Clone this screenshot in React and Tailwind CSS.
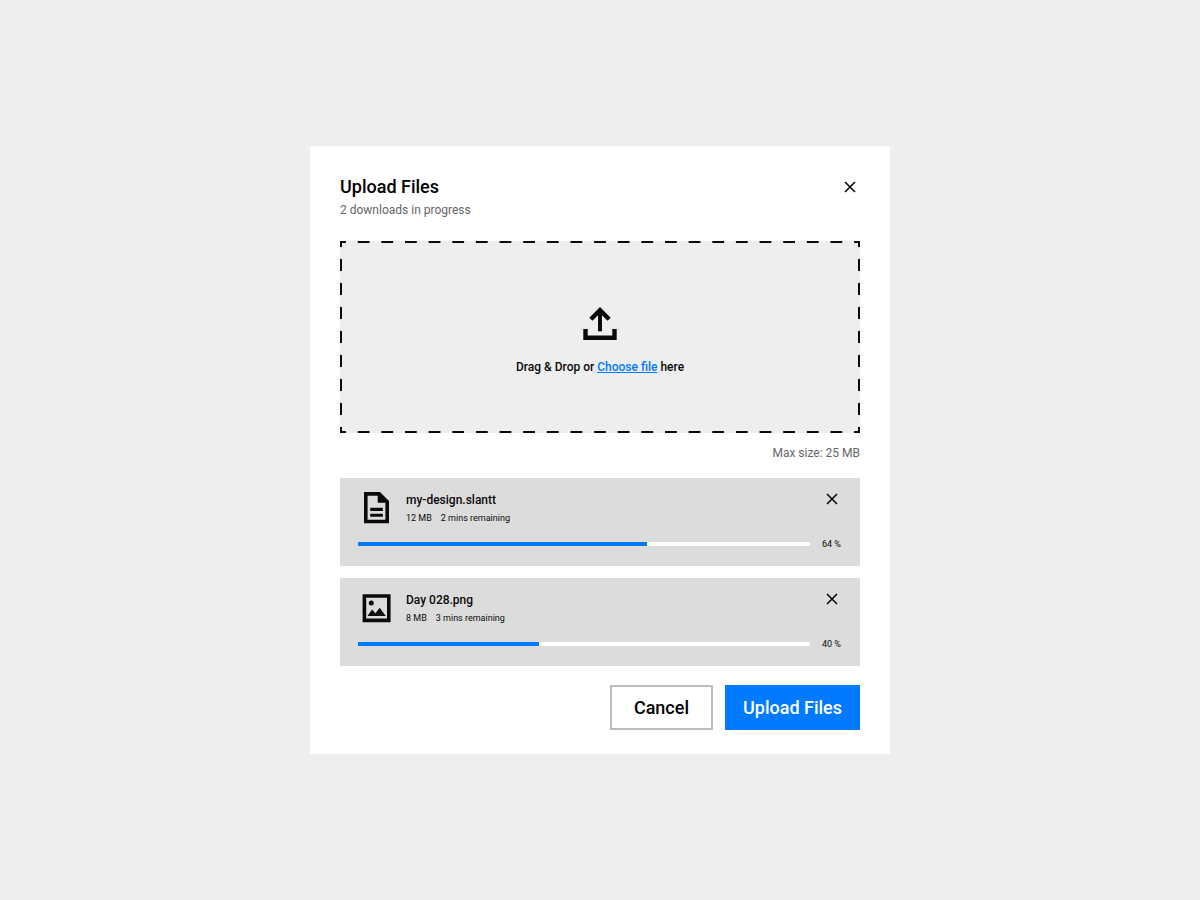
import { useState } from "react";

const initialFiles = [
    { id: 1, name: "my-design.slantt", size: "12 MB", remaining: "2 mins remaining", progress: 64, type: "document" },
    { id: 2, name: "Day 028.png", size: "8 MB", remaining: "3 mins remaining", progress: 40, type: "image" },
];

function CloseIcon() {
    return (
        <svg viewBox="0 0 12 12" className="w-3 h-3" fill="none" stroke="currentColor" strokeWidth="1.6" aria-hidden="true">
            <path d="M1 1L11 11M11 1L1 11" />
        </svg>
    );
}

function UploadIcon() {
    return (
        <svg viewBox="0 0 36 36" className="w-9 h-9" fill="none" stroke="currentColor" strokeWidth="4.4" aria-hidden="true">
            <path d="M3.5 23V31.8H32.5V23" />
            <path d="M8.9 13.2L18 4.1L27.1 13.2" />
            <path d="M18 5V25.3" strokeWidth="4" />
        </svg>
    );
}

function DocumentIcon() {
    return (
        <svg viewBox="0 0 36 36" className="w-9 h-9 shrink-0" fill="currentColor" aria-hidden="true">
            <path fillRule="evenodd" d="M6 2H22L31 11V33.3H6ZM9.6 5.8V29.8H27.4V12.7H19.7V5.8Z" />
            <path d="M12.2 17.8H24.9V20.9H12.2ZM12.2 23.7H24.9V26.8H12.2Z" />
        </svg>
    );
}

function ImageIcon() {
    return (
        <svg viewBox="0 0 36 36" className="w-9 h-9 shrink-0" fill="currentColor" aria-hidden="true">
            <path fillRule="evenodd" d="M4.6 4.2H32.6V32.2H4.6ZM8.2 7.8V28.6H29V7.8Z" />
            <circle cx="13.3" cy="13" r="2.5" />
            <path d="M9.5 26L14 19.6L17.5 23.2L21.7 17.7L27.7 26Z" />
        </svg>
    );
}

// dashes meet at every corner, 44 and 16 are the dash + gap counts of each side
function DashedBorder() {
    const dash = { strokeDasharray: "1 1", strokeDashoffset: 0.5 };

    return (
        <svg className="absolute inset-0 w-full h-full pointer-events-none" stroke="currentColor" strokeWidth="4" aria-hidden="true">
            <line x1="0" y1="0" x2="100%" y2="0" pathLength="44" {...dash} />
            <line x1="0" y1="100%" x2="100%" y2="100%" pathLength="44" {...dash} />
            <line x1="0" y1="0" x2="0" y2="100%" pathLength="16" {...dash} />
            <line x1="100%" y1="0" x2="100%" y2="100%" pathLength="16" {...dash} />
        </svg>
    );
}

function FileItem({ file, onRemove }) {
    return (
        <li className="bg-[#dcdcdc] px-[18px] pt-3 pb-4">
            <div className="flex gap-3">
                {file.type === "image" ? <ImageIcon /> : <DocumentIcon />}
                <div className="flex-1 min-w-0">
                    <p className="text-[12px] leading-5 font-medium truncate">{file.name}</p>
                    <p className="flex gap-[9px] text-[9px] leading-4">
                        <span>{file.size}</span>
                        <span>{file.remaining}</span>
                    </p>
                </div>
                <button
                    type="button"
                    aria-label={`Remove ${file.name}`}
                    onClick={() => onRemove(file.id)}
                    className="flex items-center justify-center w-5 h-[18px] cursor-pointer"
                >
                    <CloseIcon />
                </button>
            </div>
            <div className="flex items-center gap-3 mt-3">
                <div
                    role="progressbar"
                    aria-label={file.name}
                    aria-valuenow={file.progress}
                    aria-valuemin={0}
                    aria-valuemax={100}
                    className="flex-1 h-1 bg-white"
                >
                    <div className="h-full bg-[#007aff]" style={{ width: `${file.progress}%` }} />
                </div>
                <span className="w-5 text-[9px] leading-3 whitespace-nowrap">{file.progress} %</span>
            </div>
        </li>
    );
}

export default function App() {
    const [files, setFiles] = useState(initialFiles);

    const handleRemove = (id) => {
        setFiles((prev) => prev.filter((file) => file.id !== id));
    };

    return (
        <main className="min-h-screen flex items-center justify-center bg-[#eeeeee] font-['Roboto',sans-serif] text-[#0a0a0a]">
            <section className="w-full max-w-[580px] bg-white px-[30px] pt-[31px] pb-6" aria-labelledby="upload-title">
                <header className="flex items-start justify-between">
                    <div>
                        <h1 id="upload-title" className="text-[18px] leading-5 font-medium text-black">Upload Files</h1>
                        <p className="mt-[5px] text-[12px] leading-4 text-[#666666]">{files.length} downloads in progress</p>
                    </div>
                    <button type="button" aria-label="Close" className="flex items-center justify-center w-5 h-5 cursor-pointer">
                        <CloseIcon />
                    </button>
                </header>

                <div className="relative mt-[23px] h-48 pt-[9px] flex flex-col items-center justify-center bg-[#eeeeee]">
                    <DashedBorder />
                    <UploadIcon />
                    <p className="mt-[15px] text-[12px] leading-5 font-medium">
                        Drag &amp; Drop or{" "}
                        <label htmlFor="file-input" className="text-[#007aff] underline cursor-pointer">Choose file</label>
                        {" "}here
                    </p>
                    <input id="file-input" type="file" multiple className="sr-only" />
                </div>

                <p className="mt-[10px] text-[12px] leading-5 text-right text-[#666666]">Max size: 25 MB</p>

                <ul className="mt-[15px] flex flex-col gap-3">
                    {files.map((file) => (
                        <FileItem key={file.id} file={file} onRemove={handleRemove} />
                    ))}
                </ul>

                <footer className="mt-[19px] flex justify-end gap-3 text-[18px] leading-5 font-medium">
                    <button type="button" className="h-[45px] px-[22px] border-2 border-[#bdbdbd] bg-white text-black cursor-pointer">
                        Cancel
                    </button>
                    <button type="button" className="h-[45px] px-[18px] bg-[#007aff] text-white cursor-pointer">
                        Upload Files
                    </button>
                </footer>
            </section>
        </main>
    );
}
